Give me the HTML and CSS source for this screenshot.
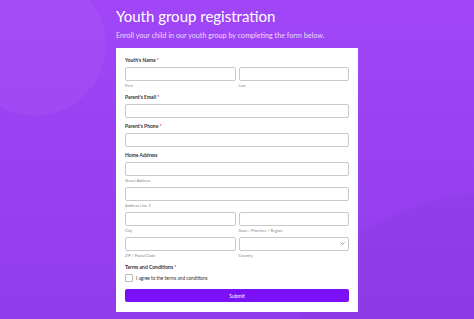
FILE: index.html
```html
<!DOCTYPE html>
<html lang="en">
<head>
    <meta charset="UTF-8">
    <title>Youth group registration</title>
    <meta name="viewport" content="width=device-width, initial-scale=1">
    <link rel="stylesheet" href="styles.css">
</head>
<body>

    <div class="page">
        <h1 class="title">Youth group registration</h1>
        <p class="subtitle">Enroll your child in our youth group by completing the form below.</p>

        <form class="card">
            <div class="field">
                <label class="label">Youth's Name <span class="req">*</span></label>
                <div class="row">
                    <div class="col">
                        <input class="input" type="text">
                        <span class="sub">First</span>
                    </div>
                    <div class="col">
                        <input class="input" type="text">
                        <span class="sub">Last</span>
                    </div>
                </div>
            </div>

            <div class="field">
                <label class="label">Parent's Email <span class="req">*</span></label>
                <input class="input" type="text">
            </div>

            <div class="field">
                <label class="label">Parent's Phone <span class="req">*</span></label>
                <input class="input" type="text">
            </div>

            <div class="field">
                <label class="label">Home Address</label>
                <div class="stack">
                    <div class="col">
                        <input class="input" type="text">
                        <span class="sub">Street Address</span>
                    </div>
                    <div class="col">
                        <input class="input" type="text">
                        <span class="sub">Address Line 2</span>
                    </div>
                    <div class="row">
                        <div class="col">
                            <input class="input" type="text">
                            <span class="sub">City</span>
                        </div>
                        <div class="col">
                            <input class="input" type="text">
                            <span class="sub">State / Province / Region</span>
                        </div>
                    </div>
                    <div class="row">
                        <div class="col">
                            <input class="input" type="text">
                            <span class="sub">ZIP / Postal Code</span>
                        </div>
                        <div class="col">
                            <div class="input select">
                                <svg class="chev" viewBox="0 0 10 6" width="5" height="3"><path d="M1 1l4 4 4-4" fill="none" stroke="#777" stroke-width="1.6"/></svg>
                            </div>
                            <span class="sub">Country</span>
                        </div>
                    </div>
                </div>
            </div>

            <div class="field">
                <label class="label">Terms and Conditions <span class="req">*</span></label>
                <div class="check">
                    <span class="box"></span>
                    <span class="check-text">I agree to the terms and conditions</span>
                </div>
            </div>

            <button class="submit" type="button">Submit</button>
        </form>
    </div>

</body>
</html>
```

FILE: styles.css
```css
body {
    margin: 0;
    font-family: Lato, 'Noto Sans', sans-serif;
    color: #333;
}

.page {
    height: 319px;
    overflow: hidden;
    box-sizing: border-box;
    padding: 5px 116px 0;
    background:
        radial-gradient(circle at 35px 45px, rgba(255,255,255,0.04) 0 70px, transparent 71px),
        radial-gradient(ellipse at 520px 330px, rgba(0,0,0,0.03) 0 220px, transparent 221px),
        linear-gradient(180deg, #a046f6 0%, #9a42f2 40%, #913ceb 100%);
}

.title {
    margin: 0;
    font-size: 15px;
    font-weight: 400;
    line-height: 22px;
    color: #fff;
}

.subtitle {
    margin: 4px 0 0;
    font-size: 7.2px;
    line-height: 10px;
    color: #eadcfd;
}

.card {
    margin-top: 7px;
    background: #fff;
    padding: 9px 9px 10px;
    display: flex;
    flex-direction: column;
}

.field {
    display: flex;
    flex-direction: column;
    margin-bottom: 5.5px;
}

.label {
    font-size: 5px;
    font-weight: 700;
    line-height: 7px;
    margin-bottom: 2.5px;
    color: #333;
}

.req {
    color: #e4405f;
}

.row {
    display: flex;
    gap: 3px;
}

.stack {
    display: flex;
    flex-direction: column;
    gap: 3px;
}

.col {
    flex: 1;
    display: flex;
    flex-direction: column;
}

.input {
    box-sizing: border-box;
    height: 14px;
    width: 100%;
    margin: 0;
    border: 1px solid #c9c9c9;
    border-radius: 2px;
    background: #fff;
}

.select {
    display: flex;
    align-items: center;
    justify-content: flex-end;
    padding-right: 3px;
}

.sub {
    margin-top: 2px;
    font-size: 4px;
    line-height: 6px;
    color: #888;
}

.check {
    display: flex;
    align-items: center;
    gap: 3px;
    margin-top: 0.5px;
}

.box {
    box-sizing: border-box;
    width: 8px;
    height: 8px;
    border: 1px solid #bbb;
    border-radius: 1px;
}

.check-text {
    font-size: 4.7px;
    color: #333;
}

.submit {
    margin-top: 1.5px;
    height: 13px;
    border: none;
    border-radius: 2px;
    background: #7910f5;
    color: #fff;
    font-family: Lato, sans-serif;
    font-size: 5px;
    padding: 0;
}
```
